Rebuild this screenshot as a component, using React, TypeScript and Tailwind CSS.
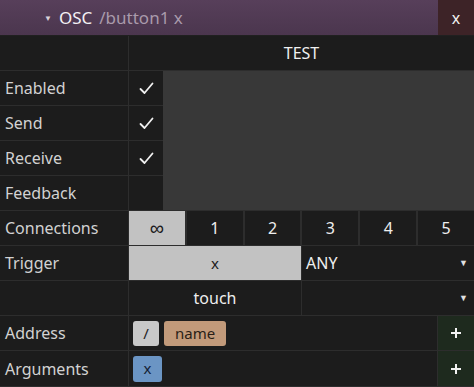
import React from 'react';

const labelCls = 'flex h-[34px] w-[128px] shrink-0 items-center bg-[#1c1c1c] pl-[5px] text-[16px] text-[#d2d2d2]';

function Caret() {
  return <span className="absolute right-[6px] top-1/2 -translate-y-1/2 text-[9px] text-[#e0e0e0]">▼</span>;
}

function Check() {
  return (
    <svg width="15" height="13" viewBox="0 0 15 13" fill="none">
      <path d="M1.5 7 L5.5 11 L13.5 1.5" stroke="#f0f0f0" strokeWidth="1.8" strokeLinecap="round" strokeLinejoin="round" />
    </svg>
  );
}

function Plus() {
  return (
    <div className="flex w-[36px] shrink-0 items-center justify-center bg-[#1e2a1e]">
      <svg width="12" height="12" viewBox="0 0 12 12">
        <path d="M6 1 V11 M1 6 H11" stroke="#f2f2f2" strokeWidth="2" />
      </svg>
    </div>
  );
}

export default function App() {
  const toggles: [string, boolean][] = [
    ['Enabled', true],
    ['Send', true],
    ['Receive', true],
    ['Feedback', false]
  ];

  return (
    <div className="h-[387px] w-[474px] overflow-hidden bg-[#2d2d2d] font-['Noto_Sans',sans-serif]">
      <div className="flex h-[36px] border-b border-[#202020] bg-gradient-to-b from-[#573f5a] to-[#4b364e]">
        <div className="flex flex-1 items-center pl-[44px]">
          <span className="mr-[7px] text-[8px] text-[#d8d0d8]">▼</span>
          <span className="text-[17px] text-[#f4f0f4]">OSC</span>
          <span className="ml-[7px] text-[17px] text-[#a99aab]">/button1 x</span>
        </div>
        <div className="flex w-[36px] items-center justify-center bg-[#3d2327] text-[16px] text-[#f0f0f0]">x</div>
      </div>

      <div className="flex flex-col gap-px">
        <div className="flex gap-px">
          <div className={labelCls}></div>
          <div className="flex flex-1 items-center justify-center bg-[#1c1c1c] text-[16px] text-[#f0f0f0]">TEST</div>
        </div>

        <div className="flex">
          <div className="flex flex-col gap-px">
            {toggles.map(([name, on]) => (
              <div key={name} className="flex gap-px">
                <div className={labelCls}>{name}</div>
                <div className="flex h-[34px] w-[34px] items-center justify-center bg-[#1c1c1c]">{on && <Check />}</div>
              </div>
            ))}
          </div>
          <div className="flex-1 bg-[#383838]"></div>
        </div>

        <div className="flex gap-px">
          <div className={labelCls}>Connections</div>
          <div className="grid flex-1 grid-cols-6 gap-[2px]">
            <div className="flex items-center justify-center bg-[#c2c2c2] text-[20px] text-[#1a1a1a]">∞</div>
            {['1', '2', '3', '4', '5'].map((n) => (
              <div key={n} className="flex items-center justify-center bg-[#1c1c1c] text-[16px] text-[#eeeeee]">{n}</div>
            ))}
          </div>
        </div>

        <div className="flex gap-px">
          <div className={labelCls}>Trigger</div>
          <div className="grid flex-1 grid-cols-2 gap-px">
            <div className="flex items-center justify-center bg-[#c2c2c2] text-[15px] text-[#1c1c1c]">x</div>
            <div className="relative flex items-center bg-[#1c1c1c] pl-[4px] text-[16px] text-[#eeeeee]">
              ANY
              <Caret />
            </div>
          </div>
        </div>

        <div className="flex gap-px">
          <div className={labelCls}></div>
          <div className="grid flex-1 grid-cols-2 gap-px">
            <div className="flex items-center justify-center bg-[#1c1c1c] text-[16px] text-[#eeeeee]">touch</div>
            <div className="relative bg-[#1c1c1c]">
              <Caret />
            </div>
          </div>
        </div>

        <div className="flex gap-px">
          <div className={labelCls}>Address</div>
          <div className="flex flex-1 items-center gap-[5px] bg-[#1c1c1c] pl-[4px]">
            <span className="flex h-[25px] w-[26px] items-center justify-center rounded-[3px] bg-[#c8c8c8] text-[15px] text-[#222]">/</span>
            <span className="flex h-[25px] items-center rounded-[3px] bg-[#c29a7a] px-[11px] text-[15px] text-[#2a1e16]">name</span>
          </div>
          <Plus />
        </div>

        <div className="flex h-[35px] gap-px">
          <div className={labelCls + ' h-[35px]'}>Arguments</div>
          <div className="flex flex-1 items-center bg-[#1c1c1c] pl-[4px]">
            <span className="flex h-[26px] w-[29px] items-center justify-center rounded-[3px] bg-[#6b95c4] text-[15px] text-[#142033]">x</span>
          </div>
          <Plus />
        </div>
      </div>
    </div>
  );
}
